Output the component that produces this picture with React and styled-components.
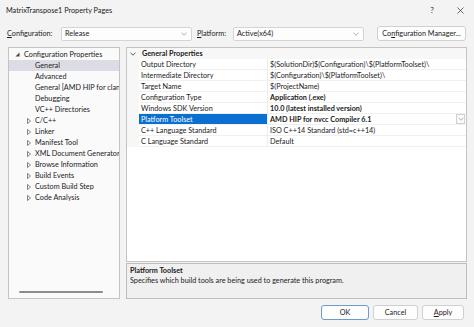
import styled, { createGlobalStyle } from "styled-components";

const GlobalStyle = createGlobalStyle`
  html, body {
    margin: 0;
    padding: 0;
    background: #f3f3f3;
  }
  * {
    box-sizing: border-box;
  }
`;

const Window = styled.div`
  width: 474px;
  height: 327px;
  background: #f3f3f3;
  font-family: Lato, "Noto Sans", sans-serif;
  font-size: 7.25px;
  color: #1b1b1b;
  display: flex;
  flex-direction: column;
  overflow: hidden;
`;

const TitleBar = styled.div`
  height: 20px;
  display: flex;
  align-items: center;
  padding: 0 0 0 6px;
  flex-shrink: 0;
`;

const TitleText = styled.div`
  flex: 1;
`;

const TitleBtn = styled.div`
  width: 28px;
  height: 20px;
  display: flex;
  align-items: center;
  justify-content: center;
  color: #333;
  font-size: 8px;
`;

const Toolbar = styled.div`
  height: 27px;
  display: flex;
  align-items: center;
  padding: 0 9px 0 7px;
  flex-shrink: 0;
`;

const Label = styled.span`
  width: ${(p) => p.w}px;
  flex-shrink: 0;
`;

const Select = styled.div`
  width: ${(p) => p.w}px;
  height: 14px;
  background: #fdfdfd;
  border: 1px solid #d4d4d4;
  border-radius: 2px;
  display: flex;
  align-items: center;
  justify-content: space-between;
  padding: 0 4px 0 3px;
  margin-right: ${(p) => p.mr || 0}px;
  flex-shrink: 0;
`;

const Button = styled.div`
  width: ${(p) => p.w}px;
  height: ${(p) => p.h || 15}px;
  background: #fdfdfd;
  border: 1px solid ${(p) => (p.primary ? "#6c9ccc" : "#d0d0d0")};
  border-radius: 3px;
  display: flex;
  align-items: center;
  justify-content: center;
  white-space: nowrap;
  flex-shrink: 0;
`;

const Main = styled.div`
  display: flex;
  gap: 6px;
  padding: 0 7px 0 8px;
  height: 252px;
  flex-shrink: 0;
`;

const Tree = styled.div`
  width: 112px;
  height: 252px;
  border: 1px solid #c4c4c4;
  background: #fafafa;
  padding-top: 1px;
  display: flex;
  flex-direction: column;
  position: relative;
`;

const TreeRow = styled.div`
  height: 11px;
  display: flex;
  align-items: center;
  padding-left: ${(p) => p.indent}px;
  background: ${(p) => (p.selected ? "#dcdce4" : "transparent")};
  white-space: nowrap;
  overflow: hidden;
`;

const Arrow = styled.span`
  width: ${(p) => p.w || 8}px;
  display: inline-flex;
  align-items: center;
  flex-shrink: 0;
`;

const ScrollBar = styled.div`
  position: absolute;
  left: 10px;
  width: 84px;
  bottom: 5px;
  height: 2px;
  border-radius: 1px;
  background: #8c8c8c;
`;

const RightCol = styled.div`
  flex: 1;
  display: flex;
  flex-direction: column;
  gap: 1px;
`;

const Grid = styled.div`
  height: 215px;
  border: 1px solid #c4c4c4;
  background: #ffffff;
  display: flex;
  flex-direction: column;
`;

const GridHeader = styled.div`
  height: 11px;
  display: flex;
  align-items: center;
  background: #f7f7f7;
  font-weight: 700;
  padding-left: 3px;
`;

const GridRow = styled.div`
  height: 11px;
  display: grid;
  grid-template-columns: 12px 129px 1fr;
  align-items: stretch;
`;

const Gutter = styled.div`
  background: #f7f7f7;
`;

const Cell = styled.div`
  display: flex;
  align-items: center;
  padding-left: 2px;
  white-space: nowrap;
  overflow: hidden;
  border-bottom: 1px solid #f0f0f0;
  border-right: ${(p) => (p.name ? "1px solid #ececec" : "none")};
  background: ${(p) => (p.active ? "#0a6fd0" : "transparent")};
  color: ${(p) => (p.active ? "#ffffff" : "inherit")};
  font-weight: ${(p) => (p.bold ? 700 : 400)};
  justify-content: space-between;
  padding-right: ${(p) => (p.drop ? 1 : 0)}px;
`;

const DropBox = styled.span`
  width: 9px;
  height: 10px;
  border: 1px solid #d0d0d0;
  background: #fbfbfb;
  display: inline-flex;
  align-items: center;
  justify-content: center;
`;

const Desc = styled.div`
  height: 36px;
  border: 1px solid #bdbdbd;
  background: #f0f0f0;
  padding: 2px 3px;
  display: flex;
  flex-direction: column;
  gap: 1px;
`;

const DescTitle = styled.div`
  font-weight: 700;
`;

const Footer = styled.div`
  display: flex;
  justify-content: flex-end;
  gap: 4px;
  padding: 6px 10px 0 0;
`;

const Chevron = ({ color = "#9a9a9a" }) => (
  <svg width="6" height="4" viewBox="0 0 6 4">
    <path d="M0.5 0.8 L3 3.2 L5.5 0.8" fill="none" stroke={color} strokeWidth="0.8" />
  </svg>
);

const Expanded = () => (
  <svg width="5" height="5" viewBox="0 0 5 5">
    <path d="M4.5 0.5 L4.5 4.5 L0.5 4.5 Z" fill="#444" />
  </svg>
);

const Collapsed = () => (
  <svg width="4" height="6" viewBox="0 0 4 6">
    <path d="M0.5 0.5 L3.5 3 L0.5 5.5 Z" fill="none" stroke="#666" strokeWidth="0.8" />
  </svg>
);

const treeItems = [
  { text: "Configuration Properties", level: 0, expanded: true },
  { text: "General", level: 1, selected: true },
  { text: "Advanced", level: 1 },
  { text: "General [AMD HIP for clang]", level: 1 },
  { text: "Debugging", level: 1 },
  { text: "VC++ Directories", level: 1 },
  { text: "C/C++", level: 1, collapsed: true },
  { text: "Linker", level: 1, collapsed: true },
  { text: "Manifest Tool", level: 1, collapsed: true },
  { text: "XML Document Generator", level: 1, collapsed: true },
  { text: "Browse Information", level: 1, collapsed: true },
  { text: "Build Events", level: 1, collapsed: true },
  { text: "Custom Build Step", level: 1, collapsed: true },
  { text: "Code Analysis", level: 1, collapsed: true },
];

const props = [
  ["Output Directory", "$(SolutionDir)$(Configuration)\\$(PlatformToolset)\\"],
  ["Intermediate Directory", "$(Configuration)\\$(PlatformToolset)\\"],
  ["Target Name", "$(ProjectName)"],
  ["Configuration Type", "Application (.exe)", true],
  ["Windows SDK Version", "10.0 (latest installed version)", true],
  ["Platform Toolset", "AMD HIP for nvcc Compiler 6.1", true, true],
  ["C++ Language Standard", "ISO C++14 Standard (std=c++14)"],
  ["C Language Standard", "Default"],
];

export default function App() {
  return (
    <>
      <GlobalStyle />
      <Window>
        <TitleBar>
          <TitleText>MatrixTranspose1 Property Pages</TitleText>
          <TitleBtn>?</TitleBtn>
          <TitleBtn>
            <svg width="7" height="7" viewBox="0 0 7 7">
              <path d="M0.5 0.5 L6.5 6.5 M6.5 0.5 L0.5 6.5" stroke="#444" strokeWidth="0.8" />
            </svg>
          </TitleBtn>
        </TitleBar>
        <Toolbar>
          <Label w={54}>
            <u>C</u>onfiguration:
          </Label>
          <Select w={131} mr={5}>
            <span>Release</span>
            <Chevron />
          </Select>
          <Label w={36}>
            <u>P</u>latform:
          </Label>
          <Select w={131} mr={13}>
            <span>Active(x64)</span>
            <Chevron />
          </Select>
          <Button w={89} h={15}>
            Co<u>n</u>figuration Manager...
          </Button>
        </Toolbar>
        <Main>
          <Tree>
            {treeItems.map((it) => (
              <TreeRow key={it.text} indent={it.level ? 18 : 6} selected={it.selected}>
                {it.expanded && (
                  <Arrow w={9}>
                    <Expanded />
                  </Arrow>
                )}
                {it.collapsed ? (
                  <Arrow w={8}>
                    <Collapsed />
                  </Arrow>
                ) : (
                  it.level > 0 && <Arrow w={8} />
                )}
                <span>{it.text}</span>
              </TreeRow>
            ))}
            <ScrollBar />
          </Tree>
          <RightCol>
            <Grid>
              <GridHeader>
                <Arrow w={12}>
                  <Chevron color="#333" />
                </Arrow>
                General Properties
              </GridHeader>
              {props.map(([name, value, bold, active]) => (
                <GridRow key={name}>
                  <Gutter />
                  <Cell name active={active}>
                    {name}
                  </Cell>
                  <Cell bold={bold} drop={active}>
                    <span>{value}</span>
                    {active && (
                      <DropBox>
                        <Chevron />
                      </DropBox>
                    )}
                  </Cell>
                </GridRow>
              ))}
            </Grid>
            <Desc>
              <DescTitle>Platform Toolset</DescTitle>
              <div>Specifies which build tools are being used to generate this program.</div>
            </Desc>
          </RightCol>
        </Main>
        <Footer>
          <Button w={48} primary>
            OK
          </Button>
          <Button w={45}>Cancel</Button>
          <Button w={42}>
            <u>A</u>pply
          </Button>
        </Footer>
      </Window>
    </>
  );
}
